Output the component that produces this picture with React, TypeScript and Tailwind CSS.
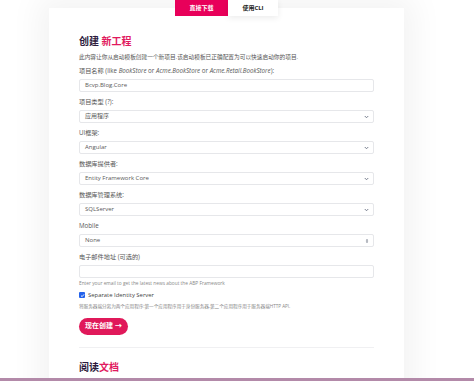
import React from "react";

const Chevron = () => (
  <svg width="5" height="4" viewBox="0 0 10 8" className="text-gray-500">
    <path d="M1.5 2 L5 5.5 L8.5 2" fill="none" stroke="currentColor" strokeWidth="1.8" />
  </svg>
);

const UpDown = () => (
  <svg width="4" height="6" viewBox="0 0 8 12" className="text-gray-500">
    <path d="M1.5 5 L4 2 L6.5 5 Z M1.5 7 L4 10 L6.5 7 Z" fill="currentColor" />
  </svg>
);

function Label({ children }: { children: React.ReactNode }) {
  return <div className="h-[10px] text-[6.2px] leading-[10px] text-[#555]">{children}</div>;
}

function Select({ value, updown }: { value: string; updown?: boolean }) {
  return (
    <div className="mt-[3px] flex h-[13px] items-center justify-between rounded-[2px] border border-[#e6e7ea] bg-white pl-[5px] pr-[4px] text-[6px] text-[#5a5a5a]">
      <span>{value}</span>
      {updown ? <UpDown /> : <Chevron />}
    </div>
  );
}

function Field({ label, value, updown }: { label: React.ReactNode; value: string; updown?: boolean }) {
  return (
    <div className="mt-[5px]">
      <Label>{label}</Label>
      <Select value={value} updown={updown} />
    </div>
  );
}

export default function App() {
  return (
    <div className="relative h-[381px] w-[474px] overflow-hidden bg-white font-['Open_Sans','Noto_Sans_CJK_SC',sans-serif]">
      <div className="ml-[49px] w-[355px]">
        <div className="relative z-10 flex justify-center">
          <div className="flex h-[16px] w-[53px] items-center justify-center bg-[#e8005a] text-[6px] font-bold text-white">
            直接下载
          </div>
          <div className="flex h-[16px] w-[50px] items-center justify-center bg-white text-[6px] font-bold text-[#222] shadow-[0_2px_6px_rgba(0,0,0,0.08)]">
            使用CLI
          </div>
        </div>
        <div className="-mt-[8px] h-[400px] bg-white px-[30px] pt-[25px] shadow-[0_0_30px_10px_rgba(0,0,0,0.05)]">
          <div className="h-[16px] text-[10px] font-bold leading-[16px]">
            <span className="text-[#2d1b3d]">创建</span> <span className="text-[#e1195e]">新工程</span>
          </div>
          <div className="mt-[3px] h-[10px] text-[5.7px] leading-[10px] text-[#555]">
            此内容让你从启动模板创建一个新项目.该启动模板已正确配置为可以快速启动你的项目.
          </div>
          <div className="mt-[4px]">
            <Label>
              项目名称 (like <i>BookStore</i> or <i>Acme.BookStore</i> or <i>Acme.Retail.BookStore</i>):
            </Label>
            <div className="mt-[3px] flex h-[13px] items-center rounded-[2px] border border-[#e6e7ea] bg-white pl-[5px] text-[6px] text-[#5a5a5a]">
              Bcvp.Blog.Core
            </div>
          </div>
          <Field label="项目类型 (?):" value="应用程序" />
          <Field label="UI框架:" value="Angular" />
          <Field label="数据库提供者:" value="Entity Framework Core" />
          <Field label="数据库管理系统:" value="SQLServer" />
          <Field label="Mobile" value="None" updown />
          <div className="mt-[5px]">
            <Label>电子邮件地址 (可选的)</Label>
            <div className="mt-[3px] h-[13px] rounded-[2px] border border-[#e6e7ea] bg-white" />
            <div className="mt-[1px] h-[8px] text-[4.8px] leading-[8px] text-[#888]">
              Enter your email to get the latest news about the ABP Framework
            </div>
          </div>
          <div className="mt-[3px] flex h-[10px] items-center gap-[3px]">
            <div className="flex h-[6px] w-[6px] items-center justify-center rounded-[1px] bg-[#2563eb]">
              <svg width="5" height="5" viewBox="0 0 10 10">
                <path d="M2 5.2 L4.2 7.3 L8 2.8" fill="none" stroke="white" strokeWidth="1.8" />
              </svg>
            </div>
            <span className="text-[5.9px] text-[#444]">Separate Identity Server</span>
          </div>
          <div className="mt-[2px] h-[8px] text-[4.6px] leading-[8px] text-[#888]">
            将服务器端分离为两个应用程序:第一个应用程序用于身份服务器,第二个应用程序用于服务器端HTTP API.
          </div>
          <div className="mt-[8px] flex h-[17px] w-[49px] items-center justify-center rounded-full bg-[#e0195a] text-[7px] font-bold text-white">
            现在创建 →
          </div>
          <div className="mt-[12px] h-px bg-[#f0f0f2]" />
          <div className="mt-[12px] text-[10px] font-bold leading-[14px]">
            <span className="text-[#2d1b3d]">阅读</span>
            <span className="text-[#e1195e]">文档</span>
          </div>
        </div>
      </div>
      <div className="absolute bottom-0 left-0 h-[3px] w-full bg-[#b38aa9]" />
    </div>
  );
}
